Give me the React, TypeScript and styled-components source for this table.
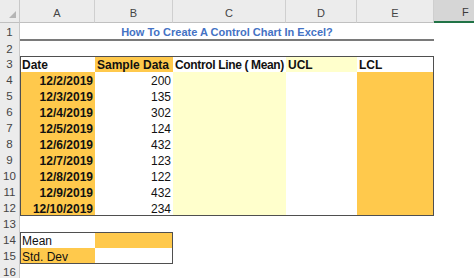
import React from "react";
import styled, { createGlobalStyle, css } from "styled-components";

const Global = createGlobalStyle`
  html, body { margin: 0; padding: 0; background: #fff; overflow: hidden; }
  body { font-family: "Liberation Sans", Arial, sans-serif; }
`;

const ORANGE = "#ffc94c";
const PALE = "#ffffcc";
const BOX = "#4f4f4f";

const Sheet = styled.div`
  display: grid;
  grid-template-columns: 20px 75px 78px 113px 71px 77px 60px;
  grid-template-rows: 23px 18px 15px;
  grid-auto-rows: 16px;
  width: 474px;
  height: 278px;
  overflow: hidden;
`;

const Corner = styled.div`
  background: #ececec;
  border-right: 1px solid #c8c8c8;
  border-bottom: 1px solid #c0c0c0;
  box-sizing: border-box;
  display: flex;
  align-items: flex-end;
  justify-content: flex-end;
  padding: 0 3px 4px 0;
`;

const ColHead = styled.div<{ $selected?: boolean }>`
  box-sizing: border-box;
  background: ${(p) => (p.$selected ? "#d6d6d6" : "#ececec")};
  border-right: 1px solid #cfcfcf;
  border-bottom: ${(p) => (p.$selected ? "2px solid #217346" : "1px solid #c0c0c0")};
  color: ${(p) => (p.$selected ? "#3a3a3a" : "#444")};
  font-size: 11px;
  display: flex;
  align-items: center;
  justify-content: ${(p) => (p.$selected ? "flex-start" : "center")};
  padding: ${(p) => (p.$selected ? "3px 0 0 28px" : "4px 0 0 0")};
`;

const RowHead = styled.div`
  box-sizing: border-box;
  background: #ececec;
  border-right: 1px solid #c8c8c8;
  color: #444;
  font-size: 11.5px;
  display: flex;
  align-items: center;
  justify-content: center;
`;

type CellProps = {
  $bg?: string;
  $bold?: boolean;
  $tight?: boolean;
  $align?: "left" | "right" | "center";
  $top?: boolean;
  $bottom?: boolean;
  $left?: boolean;
  $right?: boolean;
  $span?: number;
};

const edge = (p: CellProps) => {
  const s: string[] = [];
  if (p.$top) s.push(`inset 0 1px 0 ${BOX}`);
  if (p.$bottom) s.push(`inset 0 -1px 0 ${BOX}`);
  if (p.$left) s.push(`inset 1px 0 0 ${BOX}`);
  if (p.$right) s.push(`inset -1px 0 0 ${BOX}`);
  return s.length ? css`box-shadow: ${s.join(", ")};` : "";
};

const Cell = styled.div<CellProps>`
  box-sizing: border-box;
  background: ${(p) => p.$bg ?? "#fff"};
  font-size: 12px;
  font-weight: ${(p) => (p.$bold ? 700 : 400)};
  letter-spacing: ${(p) => (p.$tight ? "-0.35px" : "normal")};
  color: #111;
  white-space: nowrap;
  overflow: hidden;
  display: flex;
  align-items: center;
  justify-content: ${(p) =>
    p.$align === "right" ? "flex-end" : p.$align === "center" ? "center" : "flex-start"};
  padding: 1px 2px 0;
  ${(p) => (p.$span ? css`grid-column: span ${p.$span};` : "")}
  ${edge}
`;

const Title = styled.div`
  grid-column: span 5;
  box-sizing: border-box;
  border-bottom: 2px solid #7a7a7a;
  color: #4472c4;
  font-weight: 700;
  font-size: 11px;
  display: flex;
  align-items: center;
  justify-content: center;
  padding-top: 1px;
`;

const rows: [string, number][] = [
  ["12/2/2019", 200],
  ["12/3/2019", 135],
  ["12/4/2019", 302],
  ["12/5/2019", 124],
  ["12/6/2019", 432],
  ["12/7/2019", 123],
  ["12/8/2019", 122],
  ["12/9/2019", 432],
  ["12/10/2019", 234],
];

const letters = ["A", "B", "C", "D", "E"];

export default function App() {
  return (
    <>
      <Global />
      <Sheet>
        <Corner>
          <svg width="7" height="7" viewBox="0 0 7 7">
            <polygon points="7,0 7,7 0,7" fill="#b5b5b5" />
          </svg>
        </Corner>
        {letters.map((l) => (
          <ColHead key={l}>{l}</ColHead>
        ))}
        <ColHead $selected>F</ColHead>

        <RowHead>1</RowHead>
        <Title>How To Create A Control Chart In Excel?</Title>
        <Cell />

        <RowHead>2</RowHead>
        <Cell $span={6} />

        <RowHead>3</RowHead>
        <Cell $bold $top $left>Date</Cell>
        <Cell $bold $top $bg={ORANGE}>Sample Data</Cell>
        <Cell $bold $tight $top>Control Line ( Mean)</Cell>
        <Cell $bold $top $bg={PALE}>UCL</Cell>
        <Cell $bold $top $right>LCL</Cell>
        <Cell />

        {rows.map(([d, v], i) => {
          const last = i === rows.length - 1;
          return (
            <React.Fragment key={d}>
              <RowHead>{i + 4}</RowHead>
              <Cell $bold $align="right" $bg={ORANGE} $left $bottom={last}>{d}</Cell>
              <Cell $align="right" $bottom={last}>{v}</Cell>
              <Cell $bg={PALE} $bottom={last} />
              <Cell $bottom={last} />
              <Cell $bg={ORANGE} $right $bottom={last} />
              <Cell />
            </React.Fragment>
          );
        })}

        <RowHead>13</RowHead>
        <Cell $span={6} />

        <RowHead>14</RowHead>
        <Cell $top $left>Mean</Cell>
        <Cell $top $right $bg={ORANGE} />
        <Cell $span={4} />

        <RowHead>15</RowHead>
        <Cell $bottom $left $bg={ORANGE}>Std. Dev</Cell>
        <Cell $bottom $right />
        <Cell $span={4} />

        <RowHead>16</RowHead>
        <Cell $span={6} />
      </Sheet>
    </>
  );
}
